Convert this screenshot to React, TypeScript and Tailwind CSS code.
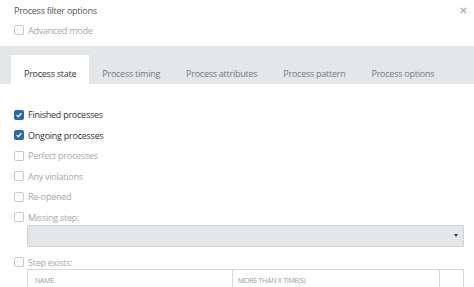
import { X } from 'lucide-react';

const tabs = ['Process state', 'Process timing', 'Process attributes', 'Process pattern', 'Process options'];

function Check({ checked, label }: { checked?: boolean; label: string }) {
  return (
    <label className="flex h-[20.5px] items-center gap-[4px]">
      {checked ? (
        <span className="flex h-[10px] w-[10px] items-center justify-center rounded-[2px] bg-[#2a69a8]">
          <svg viewBox="0 0 10 10" className="h-[8px] w-[8px]">
            <path d="M2 5.2 L4.1 7.2 L8 2.8" fill="none" stroke="white" strokeWidth="1.6" />
          </svg>
        </span>
      ) : (
        <span className="h-[10px] w-[10px] rounded-[2px] border border-[#c9c9c9] bg-white" />
      )}
      <span className={checked ? 'text-[#333]' : 'text-[#a9a9a9]'}>{label}</span>
    </label>
  );
}

export default function App() {
  return (
    <div
      className="h-[287px] w-[474px] overflow-hidden bg-white text-[9px] leading-none tracking-[-0.25px]"
      style={{ fontFamily: '"Open Sans", sans-serif' }}
    >
      <div className="flex items-center justify-between pl-[14px] pr-[6px] pt-[6px]">
        <span className="text-[#555]">Process filter options</span>
        <X className="h-[9px] w-[9px] text-[#b5b5b5]" strokeWidth={4} />
      </div>
      <div className="pl-[14px] pt-[5px]">
        <Check label="Advanced mode" />
      </div>
      <div className="mt-[5px] flex h-[38px] items-end whitespace-nowrap bg-[#e4e7ea] pl-[11px]">
        {tabs.map((t, i) => (
          <div
            key={t}
            className={
              i === 0
                ? 'flex h-[29px] items-center bg-white px-[13px] pt-[8px] text-[#333]'
                : 'flex h-[29px] items-center px-[13px] pt-[8px] text-[#777]'
            }
          >
            {t}
          </div>
        ))}
      </div>
      <div className="pl-[14px] pr-[10px] pt-[21px]">
        <Check checked label="Finished processes" />
        <Check checked label="Ongoing processes" />
        <Check label="Perfect processes" />
        <Check label="Any violations" />
        <Check label="Re-opened" />
        <Check label="Missing step:" />
        <div className="ml-[13px] mt-[-3px] flex h-[22px] items-center justify-end rounded-[2px] border border-[#cfd2d5] bg-[#e4e6e9] pr-[5px]">
          <span className="h-0 w-0 border-x-[2.5px] border-t-[3px] border-x-transparent border-t-[#333]" />
        </div>
        <div className="mt-[5.5px]">
          <Check label="Step exists:" />
        </div>
        <div className="ml-[13px] mt-[-4px] grid h-[26px] grid-cols-[205px_207px_1fr] border border-[#d8d8d8] text-[7px] text-[#9a9a9a]">
          <div className="border-r border-[#d8d8d8] pl-[7px] pt-[7px]">NAME</div>
          <div className="border-r border-[#d8d8d8] pl-[5px] pt-[7px]">MORE THAN X TIME(S)</div>
          <div />
        </div>
      </div>
    </div>
  );
}
